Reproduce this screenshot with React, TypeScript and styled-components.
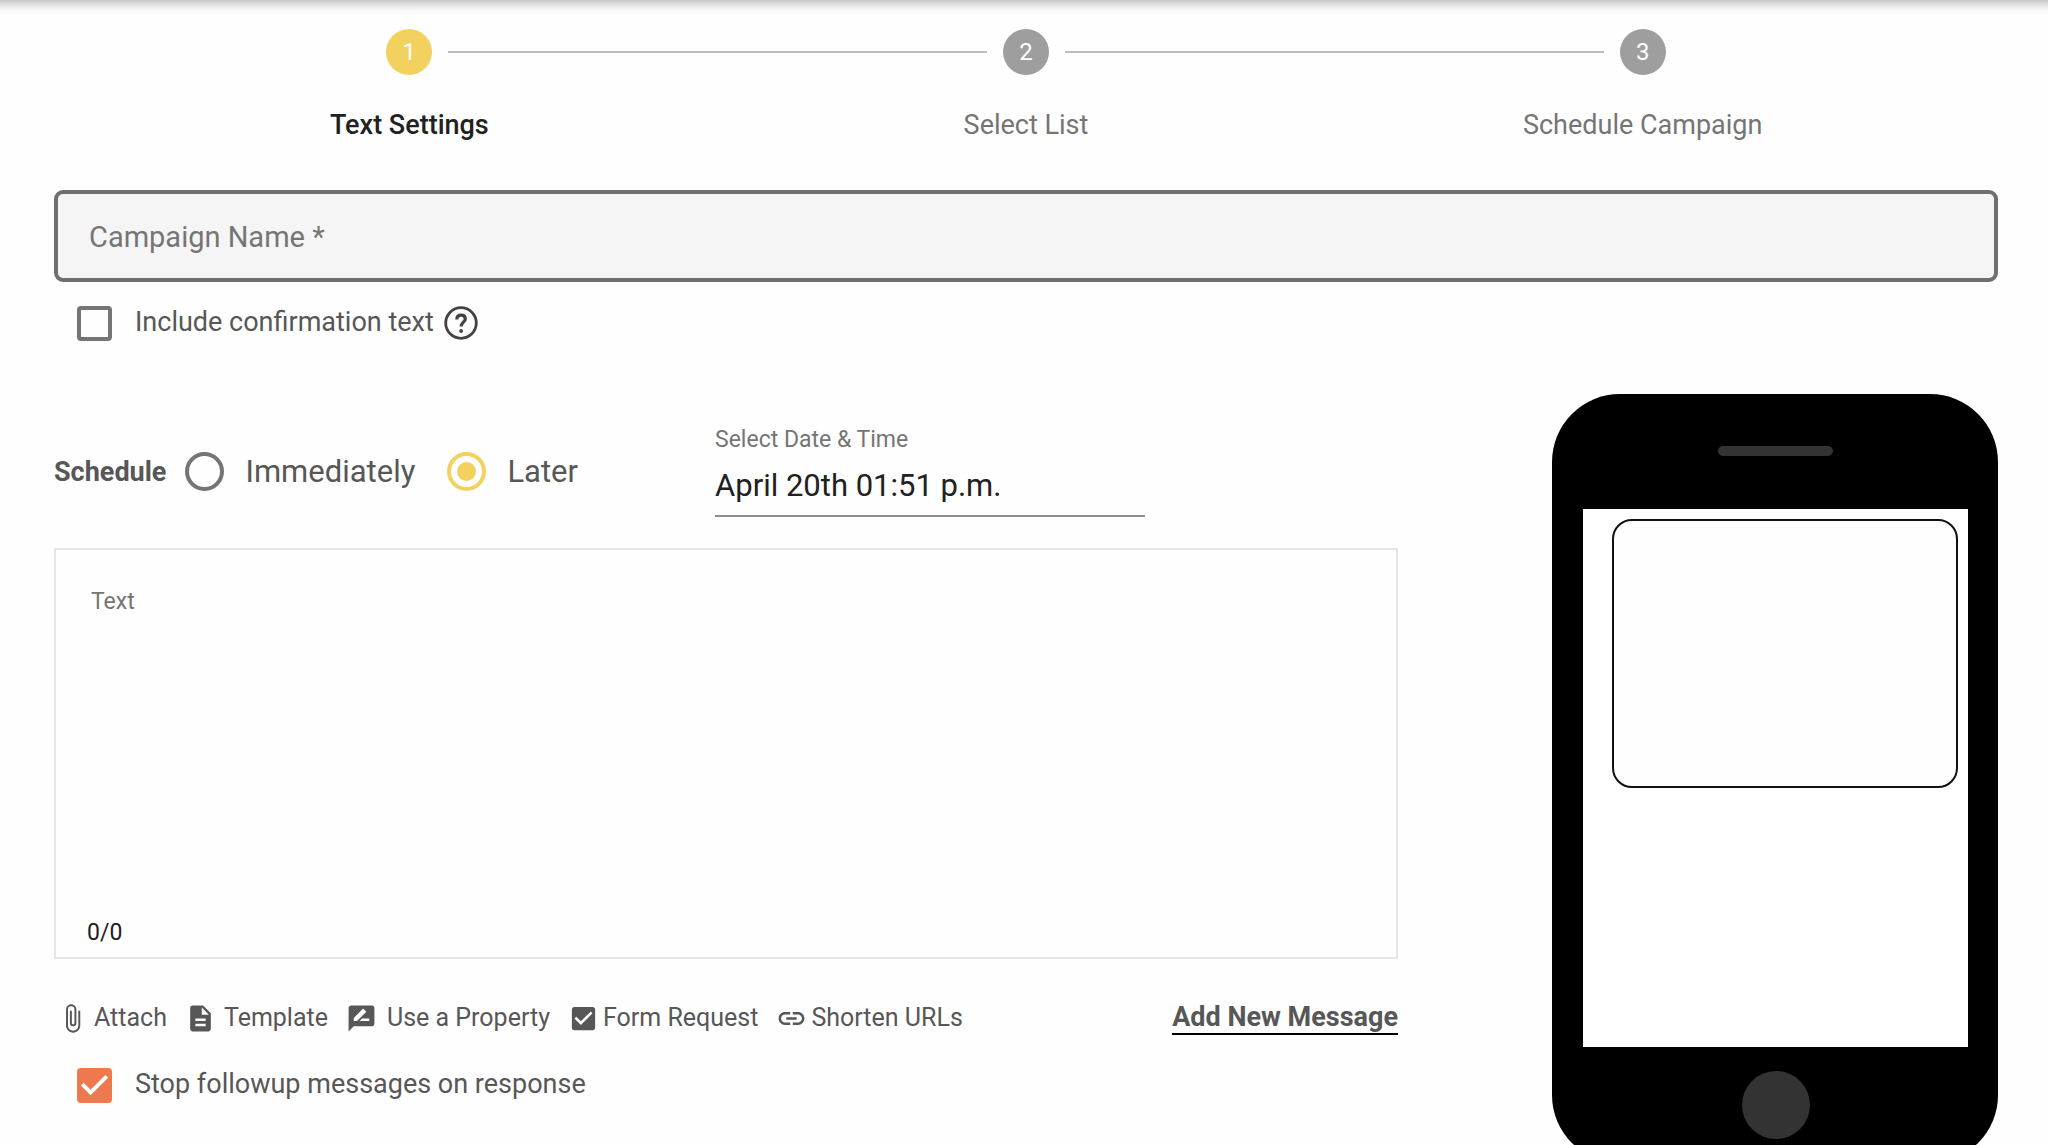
import React, { useState } from "react";
import styled, { createGlobalStyle } from "styled-components";
import {
  MdAttachFile,
  MdCheckBox,
  MdDescription,
  MdInsertLink,
  MdRateReview,
} from "react-icons/md";

const color = {
  accent: "#f3d15f",
  orange: "#ee794f",
  ink: "#212121",
  body: "#575757",
  muted: "#757575",
  line: "#bdbdbd",
  paper: "#fefefe",
};

const GlobalStyle = createGlobalStyle`
  * { box-sizing: border-box; }
  html { scrollbar-width: none; }
  body {
    margin: 0;
    background: ${color.paper};
    color: ${color.body};
    font-family: Roboto, "Liberation Sans", sans-serif;
  }
  button, input, textarea { font-family: inherit; }
`;

const TopShadow = styled.div`
  height: 15px;
  background: linear-gradient(#c6c6c6, #e4e4e4 33%, #f8f8f8 70%, ${color.paper});
`;

const Page = styled.main`
  padding: 14px 50px 0 54px;
`;

const Stepper = styled.ol`
  display: flex;
  list-style: none;
  margin: 0;
  padding: 0 47px;
`;

const Step = styled.li`
  flex: 1;
  display: flex;
  flex-direction: column;
  gap: 34px;
`;

const StepTrack = styled.div`
  display: flex;
  align-items: center;
  gap: 16px;
`;

const Connector = styled.span<{ $visible: boolean }>`
  flex: 1;
  height: 2px;
  background: ${(p) => (p.$visible ? color.line : "transparent")};
`;

const StepNumber = styled.span<{ $active: boolean }>`
  width: 46px;
  height: 46px;
  border-radius: 50%;
  display: grid;
  place-items: center;
  color: #fff;
  font-size: 24px;
  line-height: 28px;
  background: ${(p) => (p.$active ? color.accent : "#9e9e9e")};
`;

const StepLabel = styled.span<{ $active: boolean }>`
  text-align: center;
  font-size: 27px;
  line-height: 32px;
  font-weight: ${(p) => (p.$active ? 500 : 400)};
  color: ${(p) => (p.$active ? color.ink : color.muted)};
`;

const NameInput = styled.input`
  display: block;
  width: 100%;
  height: 92px;
  margin-top: 49px;
  padding: 2px 31px 0;
  border: 4px solid #6e6f6e;
  border-radius: 9px;
  background: #f5f5f5;
  color: ${color.ink};
  font-size: 29px;
  outline: none;
  &::placeholder { color: ${color.muted}; opacity: 1; }
`;

const CheckRow = styled.div<{ $top: number }>`
  display: flex;
  align-items: center;
  height: 46px;
  margin-top: ${(p) => p.$top}px;
  padding-left: 23px;
`;

const CheckLabel = styled.label`
  display: flex;
  align-items: center;
  gap: 23px;
  font-size: 27px;
  line-height: 32px;
`;

const CheckText = styled.span`
  padding-bottom: 2px;
`;

const CheckBox = styled.input`
  appearance: none;
  width: 35px;
  height: 35px;
  margin: 0;
  border: 4px solid ${color.muted};
  border-radius: 4px;
  &:checked {
    border-color: ${color.orange};
    background: ${color.orange};
  }
`;

const CheckWrap = styled.span`
  display: grid;
  & > * { grid-area: 1 / 1; }
`;

const Tick = styled.svg`
  width: 35px;
  height: 35px;
  fill: #fff;
  pointer-events: none;
`;

const HelpButton = styled.button`
  display: flex;
  margin-left: 10px;
  padding: 0;
  border: 0;
  background: none;
  color: #424242;
  svg { width: 34px; height: 34px; }
`;

const Columns = styled.div`
  display: flex;
  align-items: flex-start;
  gap: 154px;
  margin-top: 48px;
`;

const Editor = styled.section`
  flex: 1;
  min-width: 0;
  padding-top: 32px;
`;

const ScheduleRow = styled.div`
  display: flex;
  align-items: center;
`;

const RadioGroup = styled.fieldset`
  display: flex;
  align-items: center;
  width: 661px;
  margin: 0;
  padding: 0;
  border: 0;
`;

const GroupTitle = styled.strong`
  margin-right: 19px;
  font-size: 27px;
  line-height: 32px;
  font-weight: 700;
`;

const RadioLabel = styled.label`
  display: flex;
  align-items: center;
  gap: 21px;
  margin-right: 32px;
  font-size: 31px;
  line-height: 36px;
`;

const Radio = styled.input`
  appearance: none;
  display: grid;
  place-items: center;
  width: 39px;
  height: 39px;
  margin: 0;
  border: 4px solid ${color.muted};
  border-radius: 50%;
  &:checked { border-color: ${color.accent}; }
  &:checked::before {
    content: "";
    width: 19px;
    height: 19px;
    border-radius: 50%;
    background: ${color.accent};
  }
`;

const DateField = styled.label`
  display: flex;
  flex-direction: column;
  gap: 13px;
  width: 430px;
  color: ${color.muted};
  font-size: 23px;
  line-height: 28px;
`;

const DateInput = styled.input`
  width: 100%;
  height: 50px;
  padding: 0 0 12px;
  border: 0;
  border-bottom: 2px solid #8f8f8f;
  background: none;
  color: ${color.ink};
  font-size: 31px;
  outline: none;
`;

const MessageBox = styled.div`
  display: flex;
  flex-direction: column;
  height: 411px;
  margin-top: 31px;
  padding: 38px 31px 10px;
  border: 2px solid #e5e5e5;
`;

const MessageInput = styled.textarea`
  flex: 1;
  padding: 0 4px;
  border: 0;
  resize: none;
  background: none;
  color: ${color.ink};
  font-size: 23px;
  line-height: 28px;
  outline: none;
  &::placeholder { color: ${color.muted}; opacity: 1; }
`;

const Counter = styled.span`
  color: ${color.ink};
  font-size: 23px;
  line-height: 28px;
`;

const Toolbar = styled.div`
  display: flex;
  align-items: center;
  gap: 18px;
  height: 36px;
  margin-top: 41px;
  padding-left: 3px;
`;

const Tool = styled.button<{ $gap: number }>`
  display: flex;
  align-items: center;
  gap: ${(p) => p.$gap}px;
  padding: 0;
  border: 0;
  background: none;
  color: ${color.body};
  font-size: 25px;
  line-height: 32px;
  white-space: nowrap;
  svg { font-size: 31px; }
`;

const AddButton = styled.button`
  margin-left: auto;
  padding: 0;
  border: 0;
  border-bottom: 2px solid #000;
  background: none;
  color: ${color.body};
  font-size: 27px;
  line-height: 32px;
  font-weight: 700;
  white-space: nowrap;
`;

const Phone = styled.aside`
  flex: none;
  display: flex;
  flex-direction: column;
  align-items: center;
  width: 446px;
  height: 769px;
  padding: 52px 30px 0 31px;
  border-radius: 68px;
  background: #000;
`;

const Speaker = styled.span`
  width: 115px;
  height: 10px;
  border-radius: 5px;
  background: #333;
`;

const Screen = styled.div`
  width: 100%;
  height: 538px;
  margin: 53px 0 24px;
  padding: 10px 10px 0 29px;
  background: #fff;
`;

const Bubble = styled.div`
  height: 269px;
  border: 2px solid #111;
  border-radius: 20px;
  background: ${color.paper};
`;

const HomeButton = styled.span`
  width: 68px;
  height: 68px;
  border-radius: 50%;
  background: #333;
`;

const steps = ["Text Settings", "Select List", "Schedule Campaign"];

const tools = [
  { label: "Attach", Icon: MdAttachFile, gap: 6 },
  { label: "Template", Icon: MdDescription, gap: 8 },
  { label: "Use a Property", Icon: MdRateReview, gap: 10 },
  { label: "Form Request", Icon: MdCheckBox, gap: 4 },
  { label: "Shorten URLs", Icon: MdInsertLink, gap: 4 },
];

type CheckFieldProps = {
  label: string;
  checked: boolean;
  onChange: (checked: boolean) => void;
};

function CheckField({ label, checked, onChange }: CheckFieldProps) {
  return (
    <CheckLabel>
      <CheckWrap>
        <CheckBox
          type="checkbox"
          checked={checked}
          onChange={(e) => onChange(e.target.checked)}
        />
        {checked && (
          <Tick viewBox="3 3 18 18" aria-hidden="true">
            <path d="M10 17l-5-5 1.41-1.41L10 14.17l7.59-7.59L19 8l-9 9z" />
          </Tick>
        )}
      </CheckWrap>
      <CheckText>{label}</CheckText>
    </CheckLabel>
  );
}

function HelpIcon() {
  return (
    <svg viewBox="0 0 34 34" fill="none" stroke="currentColor" aria-hidden="true">
      <circle cx="17" cy="17" r="15.3" strokeWidth="2.8" />
      <path
        d="M12.8 13.4C12.8 10.6 14.6 9.2 17.1 9.2C19.6 9.2 21.3 10.7 21.3 13C21.3 16 17.1 16.6 17.1 20.6"
        strokeWidth="3.2"
      />
      <circle cx="17.1" cy="25" r="1.9" fill="currentColor" stroke="none" />
    </svg>
  );
}

export default function App() {
  const [name, setName] = useState("");
  const [confirm, setConfirm] = useState(false);
  const [when, setWhen] = useState("Later");
  const [date, setDate] = useState("April 20th 01:51 p.m.");
  const [stop, setStop] = useState(true);

  return (
    <>
      <GlobalStyle />
      <TopShadow />
      <Page>
        <Stepper>
          {steps.map((label, i) => (
            <Step key={label}>
              <StepTrack>
                <Connector $visible={i > 0} />
                <StepNumber $active={i === 0}>{i + 1}</StepNumber>
                <Connector $visible={i < steps.length - 1} />
              </StepTrack>
              <StepLabel $active={i === 0}>{label}</StepLabel>
            </Step>
          ))}
        </Stepper>

        <NameInput
          aria-label="Campaign Name"
          placeholder="Campaign Name *"
          required
          value={name}
          onChange={(e) => setName(e.target.value)}
        />
        <CheckRow $top={18}>
          <CheckField
            label="Include confirmation text"
            checked={confirm}
            onChange={setConfirm}
          />
          <HelpButton type="button" aria-label="Help">
            <HelpIcon />
          </HelpButton>
        </CheckRow>

        <Columns>
          <Editor>
            <ScheduleRow>
              <RadioGroup aria-label="Schedule">
                <GroupTitle>Schedule</GroupTitle>
                {["Immediately", "Later"].map((option) => (
                  <RadioLabel key={option}>
                    <Radio
                      type="radio"
                      name="schedule"
                      checked={when === option}
                      onChange={() => setWhen(option)}
                    />
                    {option}
                  </RadioLabel>
                ))}
              </RadioGroup>
              <DateField>
                Select Date &amp; Time
                <DateInput value={date} onChange={(e) => setDate(e.target.value)} />
              </DateField>
            </ScheduleRow>

            <MessageBox>
              <MessageInput aria-label="Text" placeholder="Text" />
              <Counter>0/0</Counter>
            </MessageBox>

            <Toolbar>
              {tools.map(({ label, Icon, gap }) => (
                <Tool key={label} type="button" $gap={gap}>
                  <Icon />
                  {label}
                </Tool>
              ))}
              <AddButton type="button">Add New Message</AddButton>
            </Toolbar>

            <CheckRow $top={26}>
              <CheckField
                label="Stop followup messages on response"
                checked={stop}
                onChange={setStop}
              />
            </CheckRow>
          </Editor>

          <Phone aria-label="Message preview">
            <Speaker />
            <Screen>
              <Bubble />
            </Screen>
            <HomeButton />
          </Phone>
        </Columns>
      </Page>
    </>
  );
}
